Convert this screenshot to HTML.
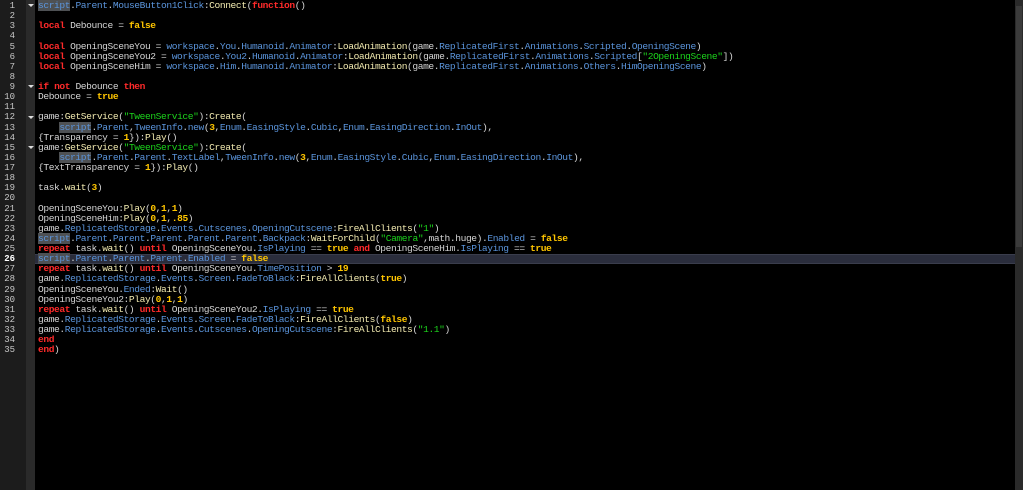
<!DOCTYPE html><html><head><style>
body{margin:0;width:1023px;height:490px;background:#000;overflow:hidden;position:relative;font-family:"Liberation Mono",monospace;font-size:9.6px;}
#g{position:absolute;left:0;top:0;width:26px;height:490px;background:#1c1c1c;}
#f{position:absolute;left:26px;top:0;width:9px;height:490px;background:#2a2a2a;}
#nums{position:absolute;left:0;top:1px;width:15px;text-align:right;color:#c8c8c8;line-height:10.12px;font-size:9px;}
#code{position:absolute;left:38px;top:1px;line-height:10.12px;color:#d4d4d4;white-space:pre;letter-spacing:-0.41px;}
#hl{position:absolute;left:35px;top:254px;width:980px;height:10px;background:#2a2d3c;border-top:1px solid #3a3d4c;border-bottom:1px solid #3a3d4c;box-sizing:border-box;}
.k{color:#ff2a2a;font-weight:bold}.p{color:#5b95dc}.m{color:#f2eab0}.n{color:#ffc600;font-weight:bold}.s{color:#1cd41c}.sel{background:#4e5154;}
#sb{position:absolute;left:1015px;top:0;width:8px;height:490px;background:#2a2a2a;}
#th{position:absolute;left:1016px;top:6px;width:6px;height:241px;background:#3b3b3b;}
.fold{position:absolute;left:28px;width:0;height:0;border-left:3px solid transparent;border-right:3px solid transparent;border-top:3px solid #ddd;}
</style></head><body>
<div id="g"></div><div id="f"></div><div id="sb"></div><div id="th"></div>
<div id="hl"></div>
<div class="fold" style="top:4px"></div><div class="fold" style="top:85px"></div><div class="fold" style="top:116px"></div><div class="fold" style="top:146px"></div>
<div id="nums">1<br>2<br>3<br>4<br>5<br>6<br>7<br>8<br>9<br>10<br>11<br>12<br>13<br>14<br>15<br>16<br>17<br>18<br>19<br>20<br>21<br>22<br>23<br>24<br>25<br><b style="color:#fff">26</b><br>27<br>28<br>29<br>30<br>31<br>32<br>33<br>34<br>35</div>
<div id="code"><span class="sel p">script</span>.<span class="p">Parent</span>.<span class="p">MouseButton1Click</span>:<span class="m">Connect</span>(<span class="k">function</span>()

<span class="k">local</span> Debounce = <span class="n">false</span>

<span class="k">local</span> OpeningSceneYou = <span class="p">workspace</span>.<span class="p">You</span>.<span class="p">Humanoid</span>.<span class="p">Animator</span>:<span class="m">LoadAnimation</span>(game.<span class="p">ReplicatedFirst</span>.<span class="p">Animations</span>.<span class="p">Scripted</span>.<span class="p">OpeningScene</span>)
<span class="k">local</span> OpeningSceneYou2 = <span class="p">workspace</span>.<span class="p">You2</span>.<span class="p">Humanoid</span>.<span class="p">Animator</span>:<span class="m">LoadAnimation</span>(game.<span class="p">ReplicatedFirst</span>.<span class="p">Animations</span>.<span class="p">Scripted</span>[<span class="s">"2OpeningScene"</span>])
<span class="k">local</span> OpeningSceneHim = <span class="p">workspace</span>.<span class="p">Him</span>.<span class="p">Humanoid</span>.<span class="p">Animator</span>:<span class="m">LoadAnimation</span>(game.<span class="p">ReplicatedFirst</span>.<span class="p">Animations</span>.<span class="p">Others</span>.<span class="p">HimOpeningScene</span>)

<span class="k">if</span> <span class="k">not</span> Debounce <span class="k">then</span>
Debounce = <span class="n">true</span>

game:<span class="m">GetService</span>(<span class="s">"TweenService"</span>):<span class="m">Create</span>(
    <span class="sel p">script</span>.<span class="p">Parent</span>,<span class="p">TweenInfo</span>.<span class="p">new</span>(<span class="n">3</span>,<span class="p">Enum</span>.<span class="p">EasingStyle</span>.<span class="p">Cubic</span>,<span class="p">Enum</span>.<span class="p">EasingDirection</span>.<span class="p">InOut</span>),
{Transparency = <span class="n">1</span>}):<span class="m">Play</span>()
game:<span class="m">GetService</span>(<span class="s">"TweenService"</span>):<span class="m">Create</span>(
    <span class="sel p">script</span>.<span class="p">Parent</span>.<span class="p">Parent</span>.<span class="p">TextLabel</span>,<span class="p">TweenInfo</span>.<span class="p">new</span>(<span class="n">3</span>,<span class="p">Enum</span>.<span class="p">EasingStyle</span>.<span class="p">Cubic</span>,<span class="p">Enum</span>.<span class="p">EasingDirection</span>.<span class="p">InOut</span>),
{TextTransparency = <span class="n">1</span>}):<span class="m">Play</span>()

task.<span class="m">wait</span>(<span class="n">3</span>)

OpeningSceneYou:<span class="m">Play</span>(<span class="n">0</span>,<span class="n">1</span>,<span class="n">1</span>)
OpeningSceneHim:<span class="m">Play</span>(<span class="n">0</span>,<span class="n">1</span>,<span class="n">.85</span>)
game.<span class="p">ReplicatedStorage</span>.<span class="p">Events</span>.<span class="p">Cutscenes</span>.<span class="p">OpeningCutscene</span>:<span class="m">FireAllClients</span>(<span class="s">"1"</span>)
<span class="sel p">script</span>.<span class="p">Parent</span>.<span class="p">Parent</span>.<span class="p">Parent</span>.<span class="p">Parent</span>.<span class="p">Parent</span>.<span class="p">Backpack</span>:<span class="m">WaitForChild</span>(<span class="s">"Camera"</span>,math.huge).<span class="p">Enabled</span> = <span class="n">false</span>
<span class="k">repeat</span> task.<span class="m">wait</span>() <span class="k">until</span> OpeningSceneYou.<span class="p">IsPlaying</span> == <span class="n">true</span> <span class="k">and</span> OpeningSceneHim.<span class="p">IsPlaying</span> == <span class="n">true</span>
<span class="sel p">script</span>.<span class="p">Parent</span>.<span class="p">Parent</span>.<span class="p">Parent</span>.<span class="p">Enabled</span> = <span class="n">false</span>
<span class="k">repeat</span> task.<span class="m">wait</span>() <span class="k">until</span> OpeningSceneYou.<span class="p">TimePosition</span> &gt; <span class="n">19</span>
game.<span class="p">ReplicatedStorage</span>.<span class="p">Events</span>.<span class="p">Screen</span>.<span class="p">FadeToBlack</span>:<span class="m">FireAllClients</span>(<span class="n">true</span>)
OpeningSceneYou.<span class="p">Ended</span>:<span class="m">Wait</span>()
OpeningSceneYou2:<span class="m">Play</span>(<span class="n">0</span>,<span class="n">1</span>,<span class="n">1</span>)
<span class="k">repeat</span> task.<span class="m">wait</span>() <span class="k">until</span> OpeningSceneYou2.<span class="p">IsPlaying</span> == <span class="n">true</span>
game.<span class="p">ReplicatedStorage</span>.<span class="p">Events</span>.<span class="p">Screen</span>.<span class="p">FadeToBlack</span>:<span class="m">FireAllClients</span>(<span class="n">false</span>)
game.<span class="p">ReplicatedStorage</span>.<span class="p">Events</span>.<span class="p">Cutscenes</span>.<span class="p">OpeningCutscene</span>:<span class="m">FireAllClients</span>(<span class="s">"1.1"</span>)
<span class="k">end</span>
<span class="k">end</span>)</div>
</body></html>
